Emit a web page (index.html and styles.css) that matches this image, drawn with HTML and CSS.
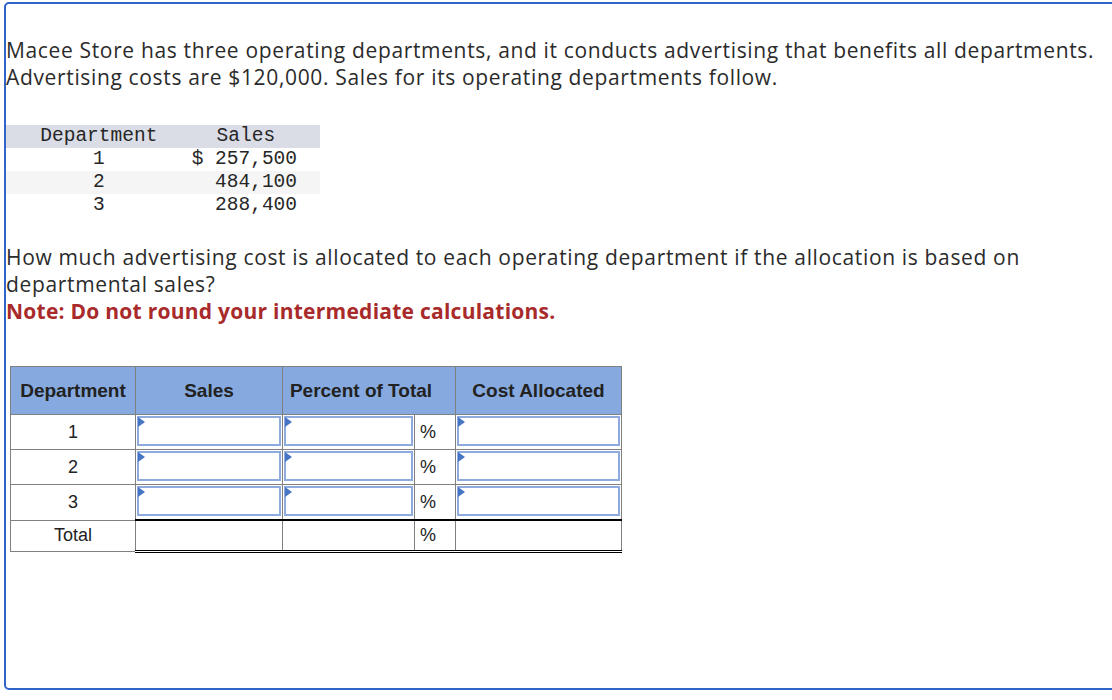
FILE: index.html
```html
<!DOCTYPE html>
<html>
<head>
<meta charset="utf-8">
<link rel="stylesheet" href="styles.css">
</head>
<body>
<div class="frame">
  <p class="text intro">Macee Store has three operating departments, and it conducts advertising that benefits all departments. Advertising costs are $120,000. Sales for its operating departments follow.</p>

  <table class="data">
    <thead>
      <tr><th class="d-dept">Department</th><th class="d-sales">Sales</th></tr>
    </thead>
    <tbody>
      <tr><td class="d-dept">1</td><td class="d-sales">$ 257,500</td></tr>
      <tr class="alt"><td class="d-dept">2</td><td class="d-sales">484,100</td></tr>
      <tr><td class="d-dept">3</td><td class="d-sales">288,400</td></tr>
    </tbody>
  </table>

  <p class="text question">How much advertising cost is allocated to each operating department if the allocation is based on departmental sales?</p>
  <p class="text note">Note: Do not round your intermediate calculations.</p>

  <table class="answer">
    <colgroup>
      <col class="c1"><col class="c2"><col class="c3"><col class="c4"><col class="c5">
    </colgroup>
    <thead>
      <tr><th>Department</th><th>Sales</th><th colspan="2" class="h-pct">Percent of Total</th><th>Cost Allocated</th></tr>
    </thead>
    <tbody>
      <tr>
        <td>1</td>
        <td class="inp"><div class="box"></div></td>
        <td class="inp"><div class="box"></div></td>
        <td class="pct">%</td>
        <td class="inp"><div class="box"></div></td>
      </tr>
      <tr>
        <td>2</td>
        <td class="inp"><div class="box"></div></td>
        <td class="inp"><div class="box"></div></td>
        <td class="pct">%</td>
        <td class="inp"><div class="box"></div></td>
      </tr>
      <tr>
        <td>3</td>
        <td class="inp"><div class="box"></div></td>
        <td class="inp"><div class="box"></div></td>
        <td class="pct">%</td>
        <td class="inp"><div class="box"></div></td>
      </tr>
      <tr class="total">
        <td>Total</td>
        <td class="tot"></td>
        <td class="tot"></td>
        <td class="tot pct">%</td>
        <td class="tot"></td>
      </tr>
    </tbody>
  </table>
</div>
</body>
</html>
```

FILE: styles.css
```css
html, body {
  margin: 0;
  padding: 0;
  background: #fff;
  overflow: hidden;
}

.frame {
  margin: 2px 0 0 4px;
  width: 1120px;
  height: 688px;
  border: 2px solid #2f64c9;
  border-radius: 5px;
  padding: 33px 0 0 0;
  box-sizing: border-box;
  color: #2b2b2b;
}

.text {
  font-family: "Open Sans", "Liberation Sans", sans-serif;
  font-size: 21px;
  letter-spacing: 0.65px;
  line-height: 27px;
  margin: 0;
  width: 1104px;
}

.data {
  margin-top: 34px;
  border-collapse: collapse;
  font-family: "Liberation Mono", monospace;
  font-size: 19.5px;
  color: #262626;
  width: 314px;
  white-space: nowrap;
}

.data th,
.data td {
  height: 23px;
  padding: 0;
  font-weight: normal;
  line-height: 23px;
}

.data thead tr {
  background: #dadde6;
}

.data tr.alt {
  background: #f5f5f5;
}

.data .d-dept {
  width: 189px;
  text-align: center;
}

.data th.d-sales {
  text-align: center;
  padding-right: 20px;
}

.data td.d-sales {
  text-align: right;
  padding-right: 23px;
}

.question {
  margin-top: 27px;
}

.note {
  color: #a82a2a;
  font-weight: 700;
  letter-spacing: 0.25px;
}

.answer {
  margin: 41px 0 0 4px;
  border-collapse: collapse;
  table-layout: fixed;
  width: 612px;
  font-family: "Liberation Sans", Arial, sans-serif;
  font-size: 18px;
  color: #222;
}

.answer col.c1 { width: 125px; }
.answer col.c2 { width: 147px; }
.answer col.c3 { width: 132px; }
.answer col.c4 { width: 41px; }
.answer col.c5 { width: 166px; }

.answer th,
.answer td {
  border: 1px solid #808080;
  padding: 0;
  text-align: center;
}

.answer th {
  background: #86aadf;
  height: 47px;
  font-size: 19px;
  font-weight: 700;
}

.answer th.h-pct {
  padding-right: 16px;
}

.answer td {
  height: 32px;
}

.answer td.pct {
  text-align: left;
  padding-left: 5px;
}

.answer td.inp {
  padding: 1px;
  vertical-align: top;
}

.box {
  position: relative;
  height: 26px;
  border: 2px solid #8eaade;
  background: #fff;
}

.box::before {
  content: "";
  position: absolute;
  left: -1px;
  top: -1px;
  border-left: 7px solid #4675c4;
  border-top: 5px solid transparent;
  border-bottom: 5px solid transparent;
}

.answer tr.total td {
  height: 29px;
}

.answer td.tot {
  border-top: 2px solid #000;
  border-bottom: 3px double #000;
}
```
